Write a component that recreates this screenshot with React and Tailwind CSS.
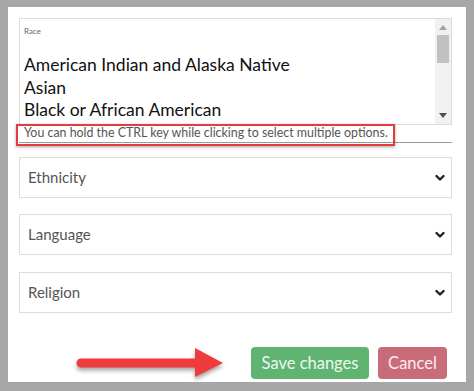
import React from "react";

const font = { fontFamily: "Lato, 'Noto Sans', sans-serif" };

function Chevron() {
  return (
    <svg width="10" height="8" viewBox="0 0 10 8" className="mr-[4px]">
      <polyline points="1.5,2 5,5.5 8.5,2" fill="none" stroke="#222" strokeWidth="2.4" strokeLinecap="round" strokeLinejoin="round" />
    </svg>
  );
}

function SelectBox({ label, className = "" }) {
  return (
    <div className={"h-[41px] border border-[#dcdcdc] flex items-center justify-between pl-[8px] pr-[2px] " + className}>
      <span className="text-[15px] text-[#555]">{label}</span>
      <Chevron />
    </div>
  );
}

export default function App() {
  return (
    <div className="w-[474px] h-[391px] bg-[#a7a7a7] pt-[7px] pl-[8px] overflow-hidden" style={font}>
      <div className="w-[458px] h-[375px] bg-white pl-[11px] pr-[14px] pt-[11px] flex flex-col">
        {/* listbox */}
        <div className="h-[107px] border border-[#dcdcdc] flex">
          <div className="flex-1 pl-[4px] pt-[7px]">
            <div className="text-[8px] leading-[10px] text-[#666]">Race</div>
            <div className="mt-[18px] text-[17.5px] leading-[22.5px] text-[#111]">
              <div>American Indian and Alaska Native</div>
              <div>Asian</div>
              <div>Black or African American</div>
            </div>
          </div>
          <div className="w-[16px] bg-[#f1f1f1] flex flex-col items-center">
            <svg width="8" height="5" viewBox="0 0 8 5" className="mt-[6px]">
              <polygon points="4,0 8,5 0,5" fill="#a3a3a3" />
            </svg>
            <div className="mt-[5px] w-[12px] h-[28px] bg-[#c1c1c1]" />
            <div className="flex-1" />
            <svg width="8" height="5" viewBox="0 0 8 5" className="mb-[6px]">
              <polygon points="0,0 8,0 4,5" fill="#505050" />
            </svg>
          </div>
        </div>
        {/* hint */}
        <div className="relative h-[18px] border-b border-[#9a9a9a] pl-[5px] flex items-center">
          <span className="text-[12.4px] text-[#555] whitespace-nowrap">You can hold the CTRL key while clicking to select multiple options.</span>
          <div className="absolute left-[-3px] top-[-1px] w-[379px] h-[22px] border-2 border-[#e23b40] shadow-[0_1px_3px_rgba(0,0,0,0.35)]" />
        </div>
        <SelectBox label="Ethnicity" className="mt-[14px]" />
        <SelectBox label="Language" className="mt-[16px]" />
        <SelectBox label="Religion" className="mt-[17px]" />
        {/* buttons */}
        <div className="flex items-center mt-[33px]">
          <svg width="156" height="34" viewBox="0 0 156 34" className="ml-[54px]" style={{ filter: "drop-shadow(0 3px 2px rgba(0,0,0,0.35))" }}>
            <line x1="8" y1="17" x2="128" y2="17" stroke="#ef3b3b" strokeWidth="9" strokeLinecap="round" />
            <polygon points="122,2 150,17 122,31" fill="#ef3b3b" />
          </svg>
          <button className="ml-[22px] w-[118px] h-[32px] rounded-[4px] bg-[#5fb472] text-[#eef8ee] text-[16.5px]">Save changes</button>
          <button className="ml-[9px] w-[69px] h-[32px] rounded-[4px] bg-[#c96b79] text-[#fbeef0] text-[16.5px]">Cancel</button>
        </div>
      </div>
    </div>
  );
}
